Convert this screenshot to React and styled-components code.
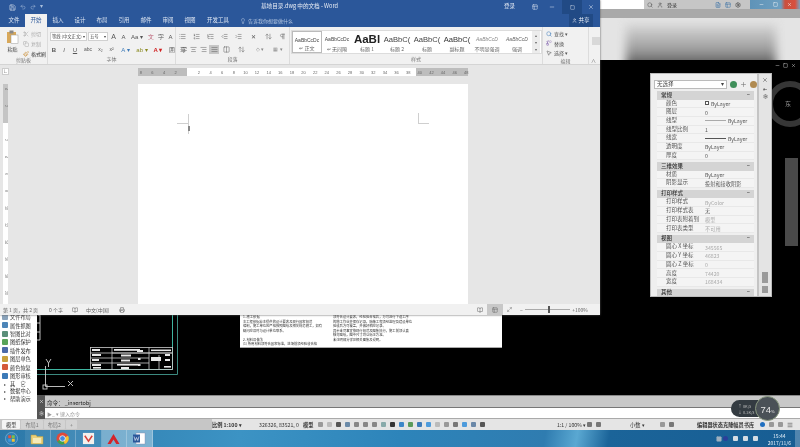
import React from "react";
import styled, { createGlobalStyle } from "styled-components";
import {
  List, ListOrdered, ListTree, IndentDecrease, IndentIncrease, ArrowUpDown, Pilcrow, AlignLeft, AlignCenter, AlignRight,
  AlignJustify, Columns2, Search, Replace, MousePointer2, Scissors, Copy, Paintbrush, Save, Undo2, Redo2, Lightbulb, User,
  Minus, Square, X, Plus, BookOpen, Printer, Layout, FileText, Maximize2, Settings, Menu
} from "lucide-react";

const CJK = `"Noto Sans CJK SC", "Liberation Sans", sans-serif`;

const Global = createGlobalStyle`
  html, body { margin: 0; padding: 0; background: #000; overflow: hidden; }
  * { box-sizing: border-box; }
  #root { width: 800px; height: 447px; }
`;

const Desktop = styled.div`
  position: relative;
  width: 800px;
  height: 447px;
  overflow: hidden;
  background: #000;
  font-family: ${CJK};
  font-size: 5.5px;
  line-height: 1;
  color: #444;
  filter: blur(0.3px);
`;

/* ---------- CAD application (background window) ---------- */
const CadWindow = styled.div`
  display: grid;
  grid-template-rows: 9px 9px 42px 335px 24px 11px 17px;
  width: 800px;
  height: 447px;
`;
const CadTitle = styled.div`
  display: flex;
  align-items: center;
  justify-content: flex-end;
  padding-left: 600px;
  background: #c6c6c6;
  color: #333;
`;
const CadSearch = styled.div`
  flex: 0 0 44px;
  height: 9px;
  background: #fff;
`;
const CadTitleTools = styled.div`
  flex: 1;
  display: flex;
  align-items: center;
  gap: 4px;
  padding-left: 3px;
  padding-right: 9px;
  font-size: 5px;
`;
const CadTitleSpacer = styled.span`
  flex: 1;
`;
const AeroControls = styled.div`
  flex: 0 0 50px;
  height: 9px;
  display: flex;
  align-items: center;
  justify-content: space-around;
  padding: 0 4px;
  background: linear-gradient(90deg, #5f93b8 0%, #6d9fc0 62%, #c9503f 70%, #d8503e 90%, #7aa3bf 100%);
  color: #fff;
`;
const CadTabsBand = styled.div`
  background: #a9a9a9;
`;
const CadRibbon = styled.div`
  position: relative;
  background: #e4e4e4;
  overflow: hidden;
`;
const RibbonShadow = styled.div`
  position: absolute;
  left: 626px;
  top: 6px;
  width: 150px;
  height: 60px;
  background: linear-gradient(180deg, #d8d8d8 0%, #9a9a9a 45%, #1c1c1c 90%);
  filter: blur(5px);
`;
const CadMain = styled.div`
  display: flex;
  min-height: 0;
`;
const ToolList = styled.div`
  position: relative;
  z-index: 1;
  flex: 0 0 37px;
  margin-bottom: -7px;
  display: flex;
  flex-direction: column;
  justify-content: flex-end;
  background: #fff;
`;
const ToolItem = styled.div`
  display: flex;
  align-items: center;
  gap: 2px;
  height: ${p => p.$h || 8.4}px;
  padding-left: 2px;
  font-size: 5.2px;
  color: #333;
  white-space: nowrap;
`;
const ToolIcon = styled.span`
  flex: 0 0 6px;
  height: 6px;
  border-radius: 1px;
  background: ${p => p.$c};
`;
const Caret = styled.span`
  flex: 0 0 6px;
  text-align: center;
  font-size: 4px;
  color: #555;
`;
const Canvas = styled.div`
  position: relative;
  flex: 1;
  background: #000;
  overflow: hidden;
`;
const DrawingSvg = styled.svg`
  position: absolute;
  left: 0;
  top: 0;
  width: 763px;
  height: 335px;
`;
const CanvasControls = styled.div`
  position: absolute;
  left: 738px;
  top: 3px;
  display: flex;
  gap: 3px;
  color: #ddd;
`;
const Paper = styled.div`
  position: absolute;
  left: 203px;
  top: 255px;
  width: 262px;
  height: 33px;
  display: grid;
  grid-template-columns: 82px 84px;
  column-gap: 8px;
  padding: 0 0 0 3px;
  background: #fff;
  border-bottom: 1px solid #aaa;
  color: #333;
  font-size: 3.3px;
  line-height: 4.5px;
  white-space: nowrap;
`;
const CommandBar = styled.div`
  display: grid;
  grid-template-columns: 37px 8px 1fr;
  grid-template-rows: 13px 11px;
  background: #fff;
`;
const CommandBlank = styled.div`
  grid-row: 1 / span 2;
  background: #fff;
`;
const CommandSide = styled.div`
  display: flex;
  align-items: center;
  justify-content: center;
  background: #555;
  color: #eee;
`;
const CommandHistory = styled.div`
  display: flex;
  align-items: flex-end;
  padding: 0 0 1px 2px;
  background: #c8c8c8;
  border-bottom: 1px solid #777;
  border-top: 1px solid #888;
  font-size: 5.5px;
  color: #222;
`;
const CommandInput = styled.div`
  display: flex;
  align-items: center;
  padding-left: 2px;
  background: #fff;
  color: #999;
  font-size: 5px;
  border-bottom: 1px solid #aaa;
`;
const Statusbar = styled.div`
  display: flex;
  align-items: center;
  background: #e5e5e5;
  color: #333;
  font-size: 5.2px;
  white-space: nowrap;
`;
const LayoutTabs = styled.div`
  flex: 0 0 212px;
  height: 100%;
  display: flex;
  align-items: center;
  gap: 1px;
  padding-left: 2px;
  background: #c6c6c6;
`;
const LayoutTab = styled.span`
  padding: 2px 4px;
  background: ${p => (p.$active ? "#f4f4f4" : "#d4d4d4")};
  color: ${p => (p.$active ? "#222" : "#777")};
  border-radius: 1px;
`;
const StatusCell = styled.span`
  flex: 0 0 ${p => p.$w}px;
  display: flex;
  align-items: center;
  color: ${p => p.$c || "#333"};
  font-weight: ${p => (p.$bold ? 700 : 400)};
`;
const StatusGlyph = styled.span`
  display: inline-block;
  flex: 0 0 5px;
  width: 5px;
  height: 5px;
  margin-right: 4px;
  background: ${p => p.$c || "#999"};
  border-radius: ${p => (p.$round ? "50%" : "1px")};
`;
const Taskbar = styled.div`
  display: flex;
  align-items: stretch;
  padding-left: 1px;
  background: linear-gradient(100deg, #2d78a8 0%, #3c93c4 30%, #2d84ba 50%, #2f7cb0 68%, #5aa8d2 72%, #1b6499 76%, #175d93 100%);
`;
const StartOrb = styled.div`
  flex: 0 0 24px;
  display: flex;
  align-items: center;
  justify-content: center;
  padding-right: 4px;
`;
const TaskButton = styled.div`
  flex: 0 0 25.5px;
  display: flex;
  align-items: center;
  justify-content: center;
  background: ${p => (p.$active ? "rgba(255,255,255,.35)" : "rgba(255,255,255,.08)")};
  border-right: 1px solid rgba(255,255,255,.25);
`;
const TraySpacer = styled.div`
  flex: 1;
`;
const Tray = styled.div`
  display: flex;
  align-items: center;
  gap: 1px;
  padding-right: 2px;
  color: #fff;
`;
const Clock = styled.div`
  display: flex;
  flex-direction: column;
  align-items: center;
  gap: 2px;
  margin-left: 5px;
  font-size: 5px;
  color: #e8f2fa;
`;
const ShowDesktop = styled.div`
  flex: 0 0 5px;
  margin-left: 2px;
  background: rgba(255,255,255,.25);
`;

/* ---------- Floating widgets ---------- */
const NavWheel = styled.div`
  position: absolute;
  left: 767px;
  top: 81px;
  width: 46px;
  height: 46px;
  border: 6px solid #363636;
  border-radius: 50%;
  display: flex;
  align-items: center;
  justify-content: flex-start;
  padding-left: 12px;
  color: #999;
  font-size: 6px;
`;
const NavBar = styled.div`
  position: absolute;
  left: 785px;
  top: 158px;
  width: 13px;
  height: 88px;
  background: #4a4a4a;
`;
const MeterPill = styled.div`
  position: absolute;
  z-index: 2;
  left: 731px;
  top: 400px;
  width: 36px;
  height: 17px;
  padding: 3px 0 0 7px;
  border-radius: 9px;
  background: #333b41;
  color: #bbb;
  font-size: 4px;
  line-height: 6px;
`;
const MeterDial = styled.div`
  position: absolute;
  z-index: 2;
  left: 755px;
  top: 396px;
  width: 25px;
  height: 25px;
  display: flex;
  align-items: baseline;
  justify-content: center;
  padding-top: 7px;
  border-radius: 50%;
  border: 1px solid #8a9a80;
  background: #4a5157;
  color: #e6e6e6;
  font: 9.5px "Liberation Sans", sans-serif;
`;
const MeterUnit = styled.span`
  font-size: 4px;
`;

/* ---------- Properties palette ---------- */
const Palette = styled.div`
  position: absolute;
  z-index: 2;
  left: 650px;
  top: 73px;
  width: 122px;
  height: 224px;
  display: grid;
  grid-template-columns: 1fr 14px;
  background: #e9e9e9;
  border: 1px solid #bbb;
  color: #555;
  overflow: hidden;
`;
const PaletteBody = styled.div`
  padding: 6px 0 0 3px;
  background: #efefef;
  overflow: hidden;
`;
const PaletteTop = styled.div`
  display: flex;
  align-items: center;
  gap: 3px;
  height: 9px;
  margin-bottom: 2px;
`;
const SelectBox = styled.div`
  flex: 0 0 73px;
  height: 9px;
  display: flex;
  align-items: center;
  justify-content: space-between;
  padding: 0 2px;
  background: #fff;
  border: 1px solid #bbb;
  color: #444;
`;
const PaletteIcon = styled.span`
  flex: 0 0 7px;
  height: 7px;
  border-radius: 50%;
  background: ${p => p.$c};
`;
const Section = styled.div`
  margin: 0 5px 1.7px 3px;
  width: 97px;
`;
const SectionHead = styled.div`
  display: flex;
  justify-content: space-between;
  align-items: center;
  height: 8.6px;
  padding: 0 4px;
  background: #d4d4d4;
  color: #333;
  font-weight: 500;
`;
const PropRow = styled.div`
  display: grid;
  grid-template-columns: 39px 1fr;
  align-items: center;
  height: 8.7px;
  padding-left: 9px;
  background: #f4f4f4;
  border-bottom: 1px solid #e8e8e8;
  white-space: nowrap;
  color: ${p => (p.$off ? "#aaa" : "#555")};
`;
const PropName = styled.span`
  color: #555;
`;
const PropValue = styled.span`
  display: flex;
  align-items: center;
  gap: 2px;
  font-size: 5.2px;
`;
const Swatch = styled.span`
  width: 4px;
  height: 4px;
  border: 1px solid #555;
  background: #fff;
`;
const LineSample = styled.span`
  width: 21px;
  border-top: ${p => (p.$thick ? "1px solid #555" : "1px solid #aaa")};
`;
const PaletteSide = styled.div`
  display: flex;
  flex-direction: column;
  align-items: center;
  gap: 3px;
  padding-top: 3px;
  background: #e4e4e4;
  color: #444;
  font-size: 5px;
  border-left: 2px solid #c4c4c4;
`;
const SideSpacer = styled.div`
  flex: 1;
`;
const SideChip = styled.div`
  width: 6px;
  height: ${p => p.$h}px;
  margin-bottom: ${p => p.$mb || 0}px;
  background: #9a9a9a;
`;

/* ---------- Word window ---------- */
const WordWindow = styled.div`
  position: absolute;
  z-index: 3;
  left: 0;
  top: 0;
  width: 600px;
  height: 315px;
  display: grid;
  grid-template-rows: 14px 13px 38px 1fr 11px;
  background: #e6e6e6;
  box-shadow: 0 0 2px #555;
`;
const WordTitle = styled.div`
  display: flex;
  align-items: center;
  background: #2b579a;
  color: #dfe7f3;
`;
const Qat = styled.div`
  flex: 0 0 236px;
  display: flex;
  align-items: center;
  gap: 4px;
  padding-left: 9px;
  color: #a9bfdc;
`;
const DocName = styled.div`
  flex: 0 0 139px;
  text-align: center;
  font-size: 5.6px;
  padding-right: 12px;
  color: #e8edf5;
  white-space: nowrap;
`;
const TitleRight = styled.div`
  flex: 1;
  display: flex;
  justify-content: flex-end;
  align-items: center;
  height: 100%;
`;
const SignIn = styled.span`
  margin-right: 13px;
  color: #e8edf5;
`;
const WinBtn = styled.span`
  flex: 0 0 ${p => p.$w || 20}px;
  height: 100%;
  display: flex;
  align-items: center;
  justify-content: center;
  background: ${p => (p.$on ? "#214a85" : "transparent")};
  color: #dfe7f3;
`;
const WordTabs = styled.div`
  display: flex;
  align-items: stretch;
  padding-left: 3px;
  background: #2b579a;
  color: #dfe7f3;
`;
const WordTab = styled.div`
  flex: 0 0 ${p => p.$w || 22}px;
  display: flex;
  align-items: center;
  justify-content: center;
  background: ${p => (p.$active ? "#f1f1f1" : "transparent")};
  color: ${p => (p.$active ? "#2b579a" : "#dfe7f3")};
  white-space: nowrap;
`;
const TellMe = styled.div`
  display: flex;
  align-items: center;
  gap: 2px;
  margin-left: 5px;
  color: #b4c6e0;
  font-size: 5px;
  white-space: nowrap;
`;
const Share = styled.div`
  margin-left: auto;
  margin-right: 7px;
  width: 24px;
  display: flex;
  align-items: center;
  justify-content: center;
  gap: 1px;
  background: #214a85;
  color: #f0f4fa;
`;
const Ribbon = styled.div`
  display: flex;
  background: #f1f1f1;
  border-bottom: 1px solid #d4d4d4;
  overflow: hidden;
`;
const Group = styled.div`
  flex: 0 0 ${p => p.$w}px;
  display: grid;
  grid-template-rows: 1fr 8px;
  border-right: 1px solid #dcdcdc;
  min-width: 0;
`;
const GroupBody = styled.div`
  display: flex;
  flex-direction: ${p => (p.$col ? "column" : "row")};
  padding: ${p => p.$pad || "3px 2px 0"};
  gap: ${p => p.$gap || 0}px;
  min-width: 0;
`;
const GroupLabel = styled.div`
  text-align: center;
  color: #777;
  font-size: 5px;
`;
const PasteCol = styled.div`
  flex: 0 0 21px;
  display: flex;
  flex-direction: column;
  align-items: center;
  gap: 2px;
  font-size: 5px;
  color: #444;
`;
const ClipCol = styled.div`
  display: flex;
  flex-direction: column;
  gap: 3px;
`;
const ClipItem = styled.div`
  display: flex;
  align-items: center;
  gap: 2px;
  height: 7px;
  color: ${p => (p.$on ? "#333" : "#aaa")};
  font-size: 5px;
  white-space: nowrap;
`;
const ToolRow = styled.div`
  display: flex;
  align-items: center;
  gap: ${p => p.$gap || 2}px;
  height: 11px;
  color: #555;
  white-space: nowrap;
`;
const Combo = styled.div`
  flex: 0 0 ${p => p.$w}px;
  height: 9px;
  display: flex;
  align-items: center;
  justify-content: space-between;
  padding: 0 1px;
  background: #fff;
  border: 1px solid #d0d0d0;
  color: #444;
  font-size: 4.3px;
  white-space: nowrap;
`;
const Btn = styled.span`
  flex: 0 0 ${p => p.$w || 8}px;
  height: 9px;
  display: flex;
  align-items: center;
  justify-content: center;
  font-family: "Liberation Sans", sans-serif;
  font-size: ${p => p.$s || 6}px;
  font-weight: ${p => (p.$b ? 700 : 400)};
  font-style: ${p => (p.$i ? "italic" : "normal")};
  color: ${p => p.$c || "#555"};
  background: ${p => (p.$on ? "#c6c6c6" : "transparent")};
`;
const Gallery = styled.div`
  flex: 1;
  display: grid;
  grid-template-columns: repeat(8, 30px) 8px;
  height: 24px;
  margin: 3px 0 0 1px;
  background: #fff;
  border: 1px solid #dcdcdc;
`;
const StyleCell = styled.div`
  display: flex;
  flex-direction: column;
  align-items: center;
  justify-content: space-between;
  padding: 3px 0 2px;
  overflow: hidden;
  white-space: nowrap;
  border: ${p => (p.$on ? "1px solid #bbb" : "0")};
  color: #555;
`;
const StylePreview = styled.div`
  height: 11px;
  display: flex;
  align-items: center;
  font-family: "Liberation Sans", "DejaVu Sans", sans-serif;
  font-size: ${p => p.$s || 5}px;
  font-weight: ${p => (p.$b ? 700 : 400)};
  font-style: ${p => (p.$i ? "italic" : "normal")};
  color: ${p => p.$c || "#444"};
`;
const StyleName = styled.div`
  font-size: 5px;
  color: #666;
`;
const GalleryScroll = styled.div`
  display: flex;
  flex-direction: column;
  justify-content: space-around;
  align-items: center;
  background: #ececec;
  color: #666;
  font-size: 4px;
`;
const EditItem = styled.div`
  display: flex;
  align-items: center;
  gap: 2px;
  height: 9.5px;
  color: #555;
  font-size: 5px;
  white-space: nowrap;
`;
const RibbonEnd = styled.div`
  flex: 1;
  display: flex;
  flex-direction: column;
  align-items: flex-end;
  justify-content: space-between;
  padding: 10px 0 1px;
  color: #777;
`;
const EndChip = styled.div`
  width: 8px;
  height: 8px;
  background: #d8d8d8;
`;
const EndCaret = styled.div`
  padding-right: 4px;
  font-size: 5px;
`;
const DocArea = styled.div`
  display: grid;
  grid-template-columns: 138px 1fr;
  grid-template-rows: 15px 1fr;
  min-height: 0;
  background: #e6e6e6;
  overflow: hidden;
`;
const RulerCorner = styled.div`
  display: flex;
  align-items: flex-start;
  padding: 3px 0 0 2px;
`;
const TabStop = styled.div`
  width: 7px;
  height: 7px;
  background: #fff;
  border: 1px solid #ccc;
  color: #555;
  font-size: 4px;
  text-align: center;
`;
const HRuler = styled.div`
  align-self: start;
  margin-top: 3px;
  width: 330px;
  height: 8px;
  background: linear-gradient(90deg, #bdbdbd 0 49px, #fff 49px 278px, #bdbdbd 278px);
`;
const RulerNums = styled.div`
  display: flex;
  margin-left: -3px;
  width: 337px;
  height: 8px;
  align-items: center;
  color: #666;
  font: 4px "Liberation Sans", sans-serif;
`;
const RulerNum = styled.span`
  flex: 0 0 11.63px;
  text-align: center;
`;
const VRulerCol = styled.div`
  padding: 4px 0 0 3px;
`;
const VRuler = styled.div`
  width: 5px;
  height: 220px;
  overflow: hidden;
  background: linear-gradient(180deg, #c4c4c4 0 39px, #fff 39px);
`;
const VRulerNums = styled.div`
  display: flex;
  flex-direction: column;
  margin-top: -3.5px;
  color: #666;
  font: 3.6px "Liberation Sans", sans-serif;
`;
const VRulerNum = styled.span`
  flex: 0 0 17px;
  height: 17px;
  width: 5px;
  display: flex;
  align-items: center;
  justify-content: center;
  writing-mode: vertical-rl;
`;
const PageWrap = styled.div`
  min-height: 0;
  padding-top: 4px;
`;
const Page = styled.div`
  position: relative;
  width: 330px;
  height: 221px;
  background: #fff;
`;
const CornerMark = styled.span`
  position: absolute;
  left: ${p => p.$x}px;
  top: ${p => p.$y}px;
  width: ${p => p.$w}px;
  height: ${p => p.$h}px;
  background: ${p => p.$c || "#cfcfcf"};
`;
const WordStatus = styled.div`
  display: flex;
  align-items: center;
  padding-left: 3px;
  background: #f1f1f1;
  color: #666;
  font-size: 5px;
  white-space: nowrap;
`;
const WordStatusItem = styled.span`
  flex: 0 0 ${p => p.$w}px;
  display: flex;
  align-items: center;
`;
const ViewBtn = styled.span`
  flex: 0 0 ${p => p.$w || 16}px;
  height: 100%;
  display: flex;
  align-items: center;
  justify-content: center;
  background: ${p => (p.$on ? "#c8c8c8" : "transparent")};
  color: #666;
`;
const ZoomSlider = styled.div`
  flex: 0 0 55px;
  height: 100%;
  display: flex;
  align-items: center;
  gap: 2px;
  margin-left: 4px;
`;
const SliderTrack = styled.div`
  position: relative;
  flex: 1;
  height: 1px;
  background: #aaa;
`;
const SliderThumb = styled.span`
  position: absolute;
  left: 50%;
  top: -3px;
  width: 2px;
  height: 7px;
  background: #555;
`;

const IC = { size: 7, strokeWidth: 1.6 };

function Drawing() {
  const white = "#e8e8e8";
  return (
    <DrawingSvg viewBox="0 0 763 335">
      <g stroke="#3fb5a0" strokeWidth="1" fill="none">
        <path d="M0 309.5H135.5V255" />
        <path d="M0 314.5H140.5V255" stroke="#3c8a80" />
      </g>
      <g stroke={white} strokeWidth=".8" fill="none">
        <path d="M1 255H3V280H0M0 263H3M0 272H3" />
        <rect x="53.5" y="287.5" width="82" height="22" stroke="#ccc" />
        <path d="M75 287.5V309.5M53.5 293H135M53.5 298H112M53.5 303H112M112 287.5V309.5M122 295V309.5M75 293H135" stroke="#ccc" />
      </g>
      <g fill={white}>
        <rect x="55" y="289" width="8" height="2" /><rect x="77" y="289" width="26" height="1.8" />
        <rect x="55" y="294" width="9" height="2" /><rect x="84" y="294.5" width="10" height="2" />
        <rect x="55" y="299" width="7" height="2" /><rect x="84" y="299.5" width="9" height="2" />
        <rect x="55" y="304" width="9" height="2" /><rect x="80" y="304" width="22" height="1.6" />
        <rect x="56" y="307" width="8" height="1.6" /><rect x="84" y="307" width="8" height="2" />
        <rect x="100" y="290" width="6" height="2" /><rect x="114" y="289.5" width="20" height="1.6" />
        <rect x="101" y="298" width="2.5" height="2" /><rect x="101" y="304" width="2.5" height="2" />
        <rect x="114" y="297" width="10" height="4" /><rect x="128" y="294" width="5" height="2" />
        <rect x="128" y="299" width="5" height="2" /><rect x="127" y="306" width="7" height="1.6" />
      </g>
      <g stroke="#cfcfcf" strokeWidth=".9" fill="none">
        <path d="M8.5 306V326.5H28" />
        <rect x="6" y="325" width="4" height="4" />
        <path d="M9 299L11.5 303L14 299M11.5 303V307" />
        <path d="M31 321L36 326M36 321L31 326" />
      </g>
    </DrawingSvg>
  );
}

const tools = [
  ["文件布局", "#8aa3bb"], ["属性抓图", "#4d86b8"], ["智图比对", "#5b8f7a"], ["图纸保护", "#5aa45a"], ["插件发布", "#4c6aa8"],
  ["图层单色", "#c9a13d"], ["颜色恢复", "#d45a3a"], ["图形审核", "#3c7ab8"]
];
const others = ["其　它", "数据中心", "帮助演示"];

const sections = [
  { t: "常规", rows: [
    ["颜色", <><Swatch />ByLayer</>], ["图层", "0"], ["线型", <><LineSample />ByLayer</>], ["线型比例", "1"],
    ["线宽", <><LineSample $thick />ByLayer</>], ["透明度", "ByLayer"], ["厚度", "0"]] },
  { t: "三维效果", rows: [["材质", "ByLayer"], ["阴影显示", "投射和接收阴影"]] },
  { t: "打印样式", rows: [["打印样式", "ByColor", 1], ["打印样式表", "无"], ["打印表附着到", "模型", 1], ["打印表类型", "不可用", 1]] },
  { t: "视图", rows: [["圆心 X 坐标", "345565", 1], ["圆心 Y 坐标", "46823", 1], ["圆心 Z 坐标", "0", 1], ["高度", "74420", 1], ["宽度", "168434", 1]] },
  { t: "其他", rows: [] }
];

const styles = [
  ["AaBbCcDc", "↵ 正文", 5, false, "#444", false, true],
  ["AaBbCcDc", "↵ 无间隔", 5, false, "#444"],
  ["AaBl", "标题 1", 11.5, true, "#222"],
  ["AaBbC(", "标题 2", 7.6, false, "#444"],
  ["AaBbC(", "标题", 7.6, false, "#444"],
  ["AaBbC(", "副标题", 7.6, false, "#333"],
  ["AaBbCcD", "不明显强调", 5, false, "#888", true],
  ["AaBbCcD", "强调", 5, false, "#666", true]
];

const tabs = [["文件",22],["开始",22],["插入",22],["设计",22],["布局",22],["引用",22],["邮件",22],["审阅",22],["视图",22],["开发工具",34]];
const rulerNums = [8,6,4,2,"",2,4,6,8,10,12,14,16,18,20,22,24,26,28,30,32,34,36,38,40,42,44,46,48];
const vRulerNums = [4,2,"",2,4,6,8,10,12,14,16,18,20];

export default function App() {
  return (
    <Desktop>
      <Global />
      <CadWindow>
        <CadTitle>
          <CadSearch />
          <CadTitleTools>
            <Search size={6} strokeWidth={1.5} />
            <User size={6} strokeWidth={1.5} />
            <span>登录</span>
            <CadTitleSpacer />
            <FileText size={6} color="#356fa5" />
            <Layout size={6} color="#356fa5" />
            <Settings size={6} />
          </CadTitleTools>
          <AeroControls><Minus size={5} /><Square size={5} /><X size={5} /></AeroControls>
        </CadTitle>
        <CadTabsBand />
        <CadRibbon><RibbonShadow /></CadRibbon>
        <CadMain>
          <ToolList>
            {tools.map(([n, c]) => (
              <ToolItem key={n}><ToolIcon $c={c} />{n}</ToolItem>
            ))}
            {others.map(n => (
              <ToolItem key={n} $h={7.4}><Caret>▸</Caret>{n}</ToolItem>
            ))}
          </ToolList>
          <Canvas>
            <Drawing />
            <CanvasControls><Minus size={5} /><Square size={5} /><X size={5} /></CanvasControls>
            <Paper>
              <div>
                　1. 施工依据<br />
                　本工程依据业主提供的设计要求及现行国家规范<br />
                编制，施工单位应严格按照图纸及相关规范施工，如有<br />
                疑问应及时与设计单位联系。<br />
                <br />
                　2. 材料及做法<br />
                　(1) 所用材料须符合国家标准，进场前须经验收合格
              </div>
              <div>
                须符合设计要求，经检验合格后，方可进行下道工序<br />
                的施工作业并保存记录。隐蔽工程须经监理及建设单位<br />
                验收后方可覆盖，并做好相应记录。<br />
                　其余未尽事宜按现行规范及图集执行，施工前须认真<br />
                核对图纸，图中尺寸均以标注为准。<br />
                　未注明部分详见相关图集及说明。
              </div>
            </Paper>
          </Canvas>
        </CadMain>
        <CommandBar>
          <CommandBlank />
          <CommandSide><X size={5} strokeWidth={2.5} /></CommandSide>
          <CommandHistory>命令： _insertobj</CommandHistory>
          <CommandSide><Settings size={5} /></CommandSide>
          <CommandInput>▶_ ▾ 键入命令</CommandInput>
        </CommandBar>
        <Statusbar>
          <LayoutTabs>
            <LayoutTab $active>模型</LayoutTab><LayoutTab>布局1</LayoutTab><LayoutTab>布局2</LayoutTab><LayoutTab>+</LayoutTab>
          </LayoutTabs>
          <StatusCell $w={47} $bold>比例 1:100 ▾</StatusCell>
          <StatusCell $w={44}>326326, 83521, 0</StatusCell>
          <StatusCell $w={15} $bold>模型</StatusCell>
          <StatusCell $w={239}>
            {["#999","#bbb","#555","#6a8aa8","#888","#888","#888","#8aa","#333","#3c86c9","#5a9a5a","#3c7ab8","#4d9bdc","#bbb","#999","#777"].map((c, i) => (
              <StatusGlyph key={i} $c={c} />
            ))}
            <StatusGlyph $c="#4d9bdc" /><StatusGlyph $c="#6a88a8" /><StatusGlyph $c="#555" />
          </StatusCell>
          <StatusCell $w={30}>1:1 / 100% ▾</StatusCell>
          <StatusCell $w={43}><StatusGlyph $c="#777" /><StatusGlyph $c="#777" /></StatusCell>
          <StatusCell $w={30}>小数 ▾</StatusCell>
          <StatusCell $w={37}><StatusGlyph $c="#999" /><StatusGlyph $c="#777" /></StatusCell>
          <StatusCell $w={63} $bold>编辑器状态克隆幅员书库</StatusCell>
          <StatusGlyph $c="#1f6fc0" $round />
          <StatusGlyph $c="#999" />
          <StatusGlyph $c="#999" />
          <Menu size={6} />
        </Statusbar>
        <Taskbar>
          <StartOrb>
            <svg width="13" height="13" viewBox="0 0 14 14">
              <circle cx="7" cy="7" r="6.5" fill="#2f7fb8" stroke="#a9d0e8" strokeWidth=".5" />
              <rect x="3.5" y="3.5" width="3.2" height="3.2" fill="#e2533c" />
              <rect x="7.3" y="3.5" width="3.2" height="3.2" fill="#7cc04a" />
              <rect x="3.5" y="7.3" width="3.2" height="3.2" fill="#3d9ae0" />
              <rect x="7.3" y="7.3" width="3.2" height="3.2" fill="#f2c230" />
            </svg>
          </StartOrb>
          <TaskButton>
            <svg width="14" height="12" viewBox="0 0 14 12">
              <path d="M1 2h5l1 1.5h6V11H1z" fill="#e8cf7a" stroke="#b79a3e" strokeWidth=".5" />
              <rect x="3" y="5" width="8" height="5" fill="#f5eab8" />
            </svg>
          </TaskButton>
          <TaskButton>
            <svg width="13" height="13" viewBox="0 0 14 14">
              <circle cx="7" cy="7" r="6.5" fill="#e0493a" />
              <path d="M7 7L1.3 10A6.5 6.5 0 0 0 9.5 13z" fill="#3fa34d" />
              <path d="M7 7L9.5 13A6.5 6.5 0 0 0 13 4z" fill="#f3c431" />
              <circle cx="7" cy="7" r="3" fill="#4688e0" stroke="#fff" strokeWidth=".8" />
            </svg>
          </TaskButton>
          <TaskButton>
            <svg width="13" height="13" viewBox="0 0 14 14">
              <rect x="1" y="1" width="12" height="12" fill="#f4f0ec" />
              <path d="M3 4l4 6 4-6" stroke="#d8403a" strokeWidth="1.6" fill="none" />
            </svg>
          </TaskButton>
          <TaskButton $active>
            <svg width="13" height="12" viewBox="0 0 14 12">
              <path d="M7 0.5L13.5 11.5H10L7 6.5L4 11.5H0.5z" fill="#d3242a" />
            </svg>
          </TaskButton>
          <TaskButton $active>
            <svg width="14" height="13" viewBox="0 0 14 13">
              <rect x="4" y="1" width="9" height="11" fill="#fff" stroke="#88a" strokeWidth=".4" />
              <rect x="1" y="2.5" width="7" height="8" fill="#2b579a" />
              <path d="M2 4.5L3.2 8.5L4.5 5.5L5.8 8.5L7 4.5" stroke="#fff" strokeWidth=".6" fill="none" />
            </svg>
          </TaskButton>
          <TraySpacer />
          <Tray>
            <Square size={6} fill="#9fb0bf" stroke="#9fb0bf" />
            <StatusGlyph $c="#2a3f9a" $round />
            <StatusGlyph $c="#d5dde4" />
            <StatusGlyph $c="#d5dde4" />
            <StatusGlyph $c="#d5dde4" />
            <Clock><span>15:44</span><span>2017/11/6</span></Clock>
          </Tray>
          <ShowDesktop />
        </Taskbar>
      </CadWindow>

      <NavWheel>东</NavWheel>
      <NavBar />
      <MeterPill>↑ 0K/s<br />↓ 0.3K/s</MeterPill>
      <MeterDial>74<MeterUnit>%</MeterUnit></MeterDial>

      <Palette>
        <PaletteBody>
          <PaletteTop>
            <SelectBox>无选择<span>▾</span></SelectBox>
            <PaletteIcon $c="#3f8f5a" />
            <Plus size={7} color="#777" />
            <PaletteIcon $c="#b08a50" />
          </PaletteTop>
          {sections.map(s => (
            <Section key={s.t}>
              <SectionHead>{s.t}<span>−</span></SectionHead>
              {s.rows.map(([n, v, off]) => (
                <PropRow key={n} $off={off}><PropName>{n}</PropName><PropValue>{v}</PropValue></PropRow>
              ))}
            </Section>
          ))}
        </PaletteBody>
        <PaletteSide>
          <X size={6} />
          <span>⇤</span>
          <Settings size={5} />
          <SideSpacer />
          <SideChip $h={11} />
          <SideChip $h={7} $mb={3} />
        </PaletteSide>
      </Palette>

      <WordWindow>
        <WordTitle>
          <Qat>
            <Save size={7} color="#fff" strokeWidth={1.6} />
            <Undo2 size={6} /><Redo2 size={6} /><span>▾</span>
          </Qat>
          <DocName>基地目录.dwg 中的文档 - Word</DocName>
          <TitleRight>
            <SignIn>登录</SignIn>
            <WinBtn $w={14}><Layout size={6} /></WinBtn>
            <WinBtn><Minus size={6} /></WinBtn>
            <WinBtn $on><Square size={5} /></WinBtn>
            <WinBtn $w={18}><X size={6} /></WinBtn>
          </TitleRight>
        </WordTitle>
        <WordTabs>
          {tabs.map(([t, w]) => <WordTab key={t} $w={w} $active={t === "开始"}>{t}</WordTab>)}
          <TellMe><Lightbulb size={6} />告诉我你想要做什么</TellMe>
          <Share><User size={5} />共享</Share>
        </WordTabs>
        <Ribbon>
          <Group $w={48}>
            <GroupBody>
              <PasteCol>
                <svg width="13" height="14" viewBox="0 0 13 14">
                  <rect x="1" y="2" width="9" height="11" fill="#d8a85a" />
                  <rect x="3.5" y="0.5" width="4" height="3" fill="#888" />
                  <rect x="5" y="5" width="7" height="8.5" fill="#fff" stroke="#999" strokeWidth=".5" />
                </svg>
                粘贴
              </PasteCol>
              <ClipCol>
                <ClipItem><Scissors size={6} />剪切</ClipItem>
                <ClipItem><Copy size={6} />复制</ClipItem>
                <ClipItem $on><Paintbrush size={6} color="#c98a2e" />格式刷</ClipItem>
              </ClipCol>
            </GroupBody>
            <GroupLabel>剪贴板</GroupLabel>
          </Group>
          <Group $w={128}>
            <GroupBody $col $pad="4px 2px 0" $gap={2}>
              <ToolRow $gap={1}>
                <Combo $w={37}>等线 (中文正文)<span>▾</span></Combo>
                <Combo $w={20}>五号<span>▾</span></Combo>
                <Btn $w={9} $s={7}>A</Btn><Btn $w={9} $s={6}>A</Btn>
                <Btn $w={16}>Aa ▾</Btn>
                <Btn $w={9} $c="#b85a70">文</Btn><Btn $w={9}>字</Btn><Btn $w={9}>A</Btn>
              </ToolRow>
              <ToolRow $gap={0}>
                <Btn $b>B</Btn><Btn $i>I</Btn><Btn $w={10}><u>U</u></Btn>
                <Btn $w={12} $s={5}>abc</Btn><Btn $w={9} $s={5}>x₂</Btn><Btn $w={9} $s={5}>x²</Btn>
                <Btn $w={15} $c="#3c7ab8">A ▾</Btn>
                <Btn $w={14} $c="#8a8a20">ab ▾</Btn>
                <Btn $w={14} $c="#d02020" $b>A ▾</Btn>
                <Btn $w={10}>囲</Btn><Btn $w={9}>字</Btn>
              </ToolRow>
            </GroupBody>
            <GroupLabel>字体</GroupLabel>
          </Group>
          <Group $w={114}>
            <GroupBody $col $pad="4px 2px 0 3px" $gap={2}>
              <ToolRow $gap={7}>
                <List {...IC} /><ListOrdered {...IC} /><ListTree {...IC} />
                <IndentDecrease {...IC} /><IndentIncrease {...IC} />
                <Btn $w={9}>✕</Btn><ArrowUpDown {...IC} /><Pilcrow {...IC} />
              </ToolRow>
              <ToolRow $gap={0}>
                <Btn><AlignLeft {...IC} /></Btn><Btn><AlignCenter {...IC} /></Btn><Btn><AlignRight {...IC} /></Btn>
                <Btn $w={10} $on><AlignJustify {...IC} /></Btn><Btn $w={10}><Columns2 {...IC} /></Btn>
                <Btn $w={16}><ArrowUpDown {...IC} /></Btn><Btn $w={18} $c="#888" $s={5}>◇ ▾</Btn><Btn $w={14} $c="#888" $s={5}>▦ ▾</Btn>
              </ToolRow>
            </GroupBody>
            <GroupLabel>段落</GroupLabel>
          </Group>
          <Group $w={253}>
            <GroupBody $pad="0">
              <Gallery>
                {styles.map(([p, n, s, b, c, i, on], k) => (
                  <StyleCell key={k} $on={on}>
                    <StylePreview $s={s} $b={b} $c={c} $i={i}>{p}</StylePreview>
                    <StyleName>{n}</StyleName>
                  </StyleCell>
                ))}
                <GalleryScroll><span>▴</span><span>▾</span><span>▾</span></GalleryScroll>
              </Gallery>
            </GroupBody>
            <GroupLabel>样式</GroupLabel>
          </Group>
          <Group $w={46}>
            <GroupBody $col $pad="2px 0 0 3px">
              <EditItem><Search size={6} color="#3c7ab8" />查找 ▾</EditItem>
              <EditItem><Replace size={6} color="#7a5aa8" />替换</EditItem>
              <EditItem><MousePointer2 size={6} />选择 ▾</EditItem>
            </GroupBody>
            <GroupLabel>编辑</GroupLabel>
          </Group>
          <RibbonEnd><EndChip /><EndCaret>∧</EndCaret></RibbonEnd>
        </Ribbon>
        <DocArea>
          <RulerCorner><TabStop>∟</TabStop></RulerCorner>
          <HRuler>
            <RulerNums>{rulerNums.map((n, i) => <RulerNum key={i}>{n}</RulerNum>)}</RulerNums>
          </HRuler>
          <VRulerCol>
            <VRuler>
              <VRulerNums>{vRulerNums.map((n, i) => <VRulerNum key={i}>{n}</VRulerNum>)}</VRulerNums>
            </VRuler>
          </VRulerCol>
          <PageWrap>
            <Page>
              <CornerMark $x={39} $y={39} $w={11} $h={1} />
              <CornerMark $x={50} $y={30} $w={1} $h={20} />
              <CornerMark $x={50} $y={42} $w={2} $h={5} $c="#888" />
              <CornerMark $x={280} $y={29} $w={1} $h={11} />
              <CornerMark $x={280} $y={39} $w={11} $h={1} />
            </Page>
          </PageWrap>
        </DocArea>
        <WordStatus>
          <WordStatusItem $w={46}>第 1 页，共 2 页</WordStatusItem>
          <WordStatusItem $w={23}>0 个字</WordStatusItem>
          <WordStatusItem $w={14}><BookOpen size={6} /></WordStatusItem>
          <WordStatusItem $w={33}>中文(中国)</WordStatusItem>
          <WordStatusItem $w={354}><Printer size={6} /></WordStatusItem>
          <ViewBtn $w={14}><BookOpen size={6} /></ViewBtn>
          <ViewBtn $on><Layout size={6} /></ViewBtn>
          <ViewBtn $w={13}><Maximize2 size={5} /></ViewBtn>
          <ZoomSlider>−<SliderTrack><SliderThumb /></SliderTrack>+</ZoomSlider>
          <WordStatusItem $w={14}>100%</WordStatusItem>
        </WordStatus>
      </WordWindow>
    </Desktop>
  );
}
